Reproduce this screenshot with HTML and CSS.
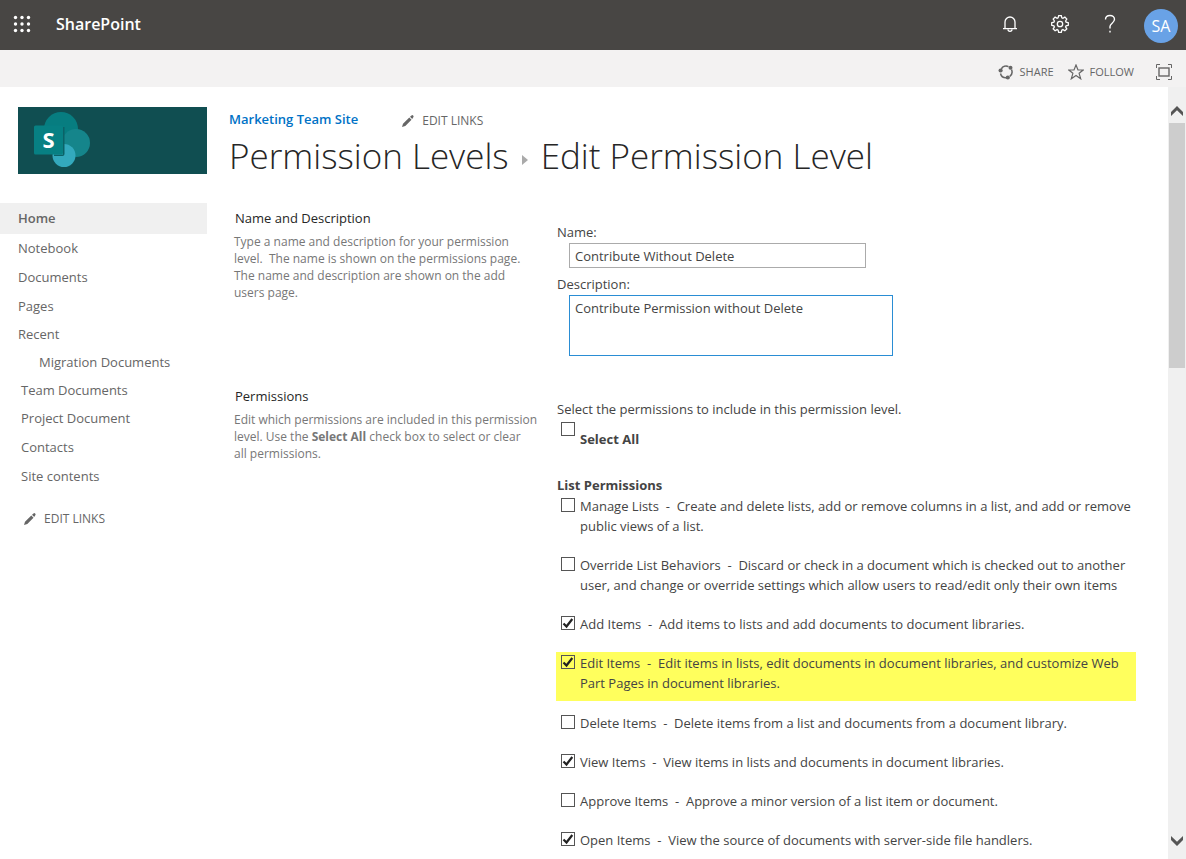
FILE: index.html
```html
<!DOCTYPE html>
<html lang="en">
<head>
<meta charset="utf-8">
<title>Edit Permission Level</title>
<link rel="stylesheet" href="styles.css">
</head>
<body>
<header class="suite">
  <button class="icon-btn waffle" aria-label="App launcher">
    <svg width="18" height="18" viewBox="0 0 18 18" fill="#fff"><circle cx="2.5" cy="2.500" r="1.700"/><circle cx="9" cy="2.500" r="1.700"/><circle cx="15.500" cy="2.500" r="1.700"/><circle cx="2.500" cy="9" r="1.700"/><circle cx="9" cy="9" r="1.700"/><circle cx="15.500" cy="9" r="1.700"/><circle cx="2.500" cy="15.500" r="1.700"/><circle cx="9" cy="15.500" r="1.700"/><circle cx="15.500" cy="15.500" r="1.700"/></svg>
  </button>
  <a class="brand" href="#">SharePoint</a>
  <div class="suite-tools">
    <button class="icon-btn" aria-label="Notifications">
      <svg width="18" height="18" viewBox="0 0 18 18" fill="none" stroke="#fff" stroke-width="1.300"><path d="M4 13.500V7a5 5 0 0 1 10 0v6.500M2 13.700h14M7 14.500a2 1.800 0 0 0 4 0"/></svg>
    </button>
    <button class="icon-btn" aria-label="Settings">
      <svg width="20" height="20" viewBox="0 0 20 20" fill="none" stroke="#fff" stroke-width="1.300"><path d="M8.700 1.600h2.600l.5 2.200 1.100.5 2-1.200 1.900 1.900-1.200 2 .5 1.100 2.200.6v2.600l-2.200.5-.5 1.100 1.200 2-1.900 1.900-2-1.200-1.100.5-.5 2.200H8.700l-.6-2.200-1-.5-2 1.200-1.900-1.900 1.200-2-.5-1.100-2.200-.5V8.700l2.200-.6.5-1.100-1.200-2 1.900-1.900 2 1.200 1-.5z"/><circle cx="10" cy="10" r="2.700"/></svg>
    </button>
    <button class="icon-btn" aria-label="Help">
      <svg width="12" height="20" viewBox="0 0 12 20" fill="none" stroke="#fff" stroke-width="1.400"><path d="M1.500 5.500C1.500 3 3.300 1.500 6 1.500S10.500 3 10.500 5.300C10.500 9 6 9.300 6 12.500V14.500M6 16.800v1.700"/></svg>
    </button>
    <button class="avatar" aria-label="Account">SA</button>
  </div>
</header>
<div class="ribbon">
  <button class="ribbon-btn">
    <svg width="16" height="16" viewBox="0 0 16 16" fill="none" stroke="#666" stroke-width="1.500"><path d="M3.300 4.800A5.700 5.700 0 0 1 10.500 2.600M13.500 5.500A5.700 5.700 0 0 1 11.800 12.300M8.500 13.800A5.700 5.700 0 0 1 2.500 9.500"/><g fill="#666" stroke="none"><circle cx="2.600" cy="6.500" r="2.100"/><circle cx="12.500" cy="3.800" r="2"/><circle cx="9.800" cy="13.500" r="2.100"/></g></svg>
    Share</button>
  <button class="ribbon-btn">
    <svg width="16" height="16" viewBox="0 0 16 16" fill="none" stroke="#666" stroke-width="1.200"><path d="M8 1l2 5h5.200l-4.100 3.300 1.600 5.500L8 11.600l-4.700 3.200 1.600-5.500L.8 6H6z"/></svg>
    Follow</button>
  <button class="ribbon-btn focus-btn" aria-label="Focus on content">
    <svg width="16" height="16" viewBox="0 0 16 16" fill="none" stroke="#666"><path d="M.5 4V.500H4M12 .5h3.500V4M15.500 12v3.500H12M4 15.500H.5V12"/><rect x="3" y="4" width="10" height="8" stroke-width="1.400"/></svg>
  </button>
</div>
<div class="workspace">
  <aside class="side">
    <svg class="logo" viewBox="0 0 189 67" role="img" aria-label="SharePoint">
      <rect width="189" height="67" fill="#104e51"/>
      <circle cx="43" cy="22" r="17" fill="#077d80"/>
      <circle cx="58" cy="36" r="14" fill="#15858b"/>
      <circle cx="46" cy="48.500" r="11.500" fill="#33a9bd"/>
      <path d="M45 20h1.500V47q0 2-2 2H36v-1.500h9z" fill="#0b6267"/>
      <rect x="16" y="18.500" width="29" height="29" rx="1.500" fill="#078083"/>
      <text class="logo-s" x="30.500" y="40.500" text-anchor="middle">S</text>
    </svg>
    <nav>
      <ul class="nav">
        <li class="current"><a href="#">Home</a></li>
        <li><a href="#">Notebook</a></li>
        <li><a href="#">Documents</a></li>
        <li class="tight"><a href="#">Pages</a></li>
        <li class="tight"><a href="#">Recent</a>
          <ul class="subnav"><li><a href="#">Migration Documents</a></li></ul></li>
        <li class="tight inset"><a href="#">Team Documents</a></li>
        <li class="inset"><a href="#">Project Document</a></li>
        <li class="inset"><a href="#">Contacts</a></li>
        <li class="tight inset"><a href="#">Site contents</a></li>
      </ul>
      <button class="edit-links">
        <svg width="12" height="12" viewBox="0 0 12 12" fill="#666"><path d="M0 12l1-3.300 6.300-6.200 2.200 2.200-6.200 6.300zM8 1.800L9.500.4q.8-.7 1.600.1.900.9.200 1.700L10.200 4z"/></svg>
        Edit Links</button>
    </nav>
  </aside>
  <main class="main">
    <div class="crumb">
      <a class="site" href="#">Marketing Team Site</a>
      <button class="edit-links">
        <svg width="12" height="12" viewBox="0 0 12 12" fill="#666"><path d="M0 12l1-3.300 6.300-6.200 2.200 2.200-6.200 6.300zM8 1.800L9.500.4q.8-.7 1.600.1.900.9.200 1.700L10.200 4z"/></svg>
        Edit Links</button>
    </div>
    <h1 class="title"><a href="#">Permission Levels</a>
      <svg width="6" height="12" viewBox="0 0 6 12" fill="#aaa"><path d="M0 1l6 5-6 5z"/></svg>
      <span>Edit Permission Level</span></h1>
    <form class="form">
      <section class="about">
        <h2>Name and Description</h2>
        <p>Type a name and description for your permission<br>level.&nbsp; The name is shown on the permissions page.<br>The name and description are shown on the add<br>users page.</p>
      </section>
      <section class="fields">
        <label for="name">Name:</label>
        <input class="box" id="name" type="text" value="Contribute Without Delete">
        <label for="desc">Description:</label>
        <textarea class="box area" id="desc">Contribute Permission without Delete</textarea>
      </section>
      <section class="about">
        <h2>Permissions</h2>
        <p>Edit which permissions are included in this permission<br>level. Use the <b>Select All</b> check box to select or clear<br>all permissions.</p>
      </section>
      <section class="perms">
        <p class="intro">Select the permissions to include in this permission level.</p>
        <div class="perm all"><input type="checkbox" id="all"><label for="all">Select All</label></div>
        <h3>List Permissions</h3>
        <div class="perm"><input type="checkbox" id="p1"><label for="p1">Manage Lists&nbsp; -&nbsp; Create and delete lists, add or remove columns in a list, and add or remove<br>public views of a list.</label></div>
        <div class="perm"><input type="checkbox" id="p2"><label for="p2">Override List Behaviors&nbsp; -&nbsp; Discard or check in a document which is checked out to another<br>user, and change or override settings which allow users to read/edit only their own items</label></div>
        <div class="perm"><input type="checkbox" id="p3" checked><label for="p3">Add Items&nbsp; -&nbsp; Add items to lists and add documents to document libraries.</label></div>
        <div class="perm marked"><input type="checkbox" id="p4" checked><label for="p4">Edit Items&nbsp; -&nbsp; Edit items in lists, edit documents in document libraries, and customize Web<br>Part Pages in document libraries.</label></div>
        <div class="perm"><input type="checkbox" id="p5"><label for="p5">Delete Items&nbsp; -&nbsp; Delete items from a list and documents from a document library.</label></div>
        <div class="perm"><input type="checkbox" id="p6" checked><label for="p6">View Items&nbsp; -&nbsp; View items in lists and documents in document libraries.</label></div>
        <div class="perm"><input type="checkbox" id="p7"><label for="p7">Approve Items&nbsp; -&nbsp; Approve a minor version of a list item or document.</label></div>
        <div class="perm"><input type="checkbox" id="p8" checked><label for="p8">Open Items&nbsp; -&nbsp; View the source of documents with server-side file handlers.</label></div>
      </section>
    </form>
  </main>
  <div class="scroll">
    <button class="scroll-btn" aria-label="Scroll up"><svg width="12" height="10" viewBox="0 0 12 10" fill="#555"><path d="M6 0l6 6v4L6 4.200 0 10V6z"/></svg></button>
    <div class="thumb"></div>
    <button class="scroll-btn end" aria-label="Scroll down"><svg width="12" height="10" viewBox="0 0 12 10" fill="#555"><path d="M6 10l6-6V0L6 5.800 0 0v4z"/></svg></button>
  </div>
</div>
</body>
</html>
```
FILE: styles.css
```css
* { box-sizing: border-box; }
body {
  margin: 0;
  height: 100vh;
  display: flex;
  flex-direction: column;
  overflow: hidden;
  background: #fff;
  color: #444;
  font: 13px/20px "Open Sans", "Noto Sans", sans-serif;
}
h1, h2, h3, p, ul { margin: 0; padding: 0; font-weight: 400; }
ul { list-style: none; }
a { color: inherit; text-decoration: none; }
button { font: inherit; color: inherit; background: none; border: 0; padding: 0; }
svg { display: block; flex: none; }

.suite {
  flex: none;
  height: 50px;
  display: flex;
  align-items: center;
  padding: 0 8px 0 12px;
  background: #484644;
  color: #fff;
}
.icon-btn { width: 50px; height: 48px; display: flex; align-items: center; justify-content: center; padding-bottom: 2px; }
.waffle { width: 20px; }
.brand { margin-left: 24px; font-size: 16px; font-weight: 600; line-height: 48px; padding-bottom: 2px; }
.suite-tools { margin-left: auto; display: flex; align-items: center; }
.avatar { width: 34px; height: 34px; margin: 2px 0 0 9px; border-radius: 50%; background: #69a2e6; font-size: 16px; }

.ribbon {
  flex: none;
  height: 37px;
  display: flex;
  align-items: center;
  justify-content: flex-end;
  gap: 14px;
  padding: 6px 14px 0 0;
  background: #f3f2f2;
  color: #666;
}
.ribbon-btn { display: flex; align-items: center; gap: 6px; font-size: 11px; text-transform: uppercase; }
.focus-btn { margin-left: 8px; }

.workspace { flex: 1; min-height: 0; display: flex; }
.side { flex: none; width: 207px; padding-top: 20px; color: #666; }
.logo { width: 189px; height: 67px; margin-left: 18px; }
.logo-s { fill: #fff; font: 700 22px "Open Sans", sans-serif; }
.nav { margin-top: 29px; line-height: 29px; }
.nav a { display: block; padding-left: 18px; }
.nav .current { background: #f0f0f0; font-weight: 600; line-height: 31px; }
.nav .tight { line-height: 28px; }
.nav .inset a { padding-left: 21px; }
.nav .subnav a { padding-left: 39px; }
.edit-links { display: flex; align-items: center; gap: 8px; font-size: 12px; text-transform: uppercase; color: #666; }
.nav + .edit-links { margin: 19px 0 0 24px; }

.main { flex: 1; min-width: 0; padding: 22px 20px 0 22px; }
.crumb { display: flex; align-items: flex-start; gap: 44px; }
.crumb .edit-links { padding-top: 2px; }
.site { color: #0072c6; font-weight: 600; }
.title {
  display: flex;
  align-items: center;
  gap: 13px;
  font-size: 35px;
  font-weight: 300;
  line-height: 50px;
  color: #262626;
  white-space: nowrap;
}
.title svg { margin-top: 8px; }
.form { display: grid; grid-template-columns: 323px 1fr; padding: 26px 0 0 5px; white-space: nowrap; }
.about h2 { padding-left: 1px; font-size: 13px; line-height: 22px; color: #262626; }
.about p { margin-top: 4px; font-size: 12px; line-height: 17px; color: #777; }
.fields { height: 178px; padding-top: 15px; }
.fields label { display: block; line-height: 20px; }
.box {
  display: block;
  width: 297px;
  height: 25px;
  margin: 1px 0 6px 12px;
  padding: 2px 5px;
  border: 1px solid #ababab;
  font: inherit;
  color: inherit;
  outline: 0;
}
.area { width: 324px; height: 61px; border-color: #2a8dd4; resize: none; }

.perms { padding-top: 14px; }
.intro { margin-bottom: 1px; }
.perm { display: flex; align-items: flex-start; gap: 5px; padding-left: 4px; margin-bottom: 19px; }
.perm input {
  appearance: none;
  flex: none;
  width: 14px;
  height: 14px;
  margin: 2px 0 0;
  border: 1px solid #555;
  background: #fff;
}
.perm input:checked {
  background: url("data:image/svg+xml,%3Csvg xmlns='http://www.w3.org/2000/svg' viewBox='0 0 12 12'%3E%3Cpath d='M1.500 6.500l3 3L10.300 2' fill='none' stroke='%23222' stroke-width='2.200'/%3E%3C/svg%3E") center / 12px 12px #fff;
}
.perm.all { margin-bottom: 25px; font-weight: 700; }
.all label { padding-top: 9px; }
.perms h3 { font-size: 13px; font-weight: 700; line-height: 22px; }
.marked { width: 580px; margin: -1px 0 12px -1px; padding: 1px 0 8px 5px; background: #ffff5d; }
.marked input:checked { background-color: #ffff5d; }

.scroll { flex: none; width: 18px; padding: 0 1px; display: flex; flex-direction: column; background: #f0f0f0; }
.scroll-btn { height: 36px; display: flex; align-items: center; justify-content: center; padding-top: 12px; }
.scroll-btn.end { margin-top: auto; padding: 0; }
.thumb { height: 245px; background: #cdcdcd; }
```
